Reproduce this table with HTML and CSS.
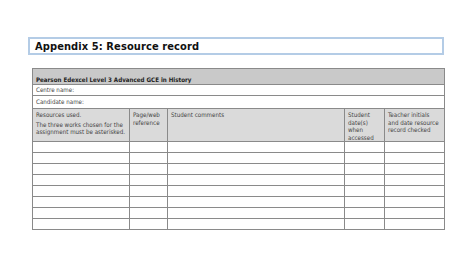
FILE: index.html
```html
<!DOCTYPE html>
<html lang="en">
<head>
  <meta charset="UTF-8">
  <title>Appendix 5: Resource record</title>
  <link rel="stylesheet" href="styles.css">
</head>
<body>
  <!-- Title box -->
  <div class="title-box">
    <h1>Appendix 5: Resource record</h1>
  </div>

  <!-- Resource record table -->
  <table class="record">
    <colgroup>
      <col class="c1"><col class="c2"><col class="c3"><col class="c4"><col class="c5">
    </colgroup>
    <tr class="row-title">
      <th colspan="5">Pearson Edexcel Level 3 Advanced GCE in History</th>
    </tr>
    <tr class="row-info centre">
      <td colspan="5">Centre name:</td>
    </tr>
    <tr class="row-info candidate">
      <td colspan="5">Candidate name:</td>
    </tr>
    <tr class="row-head">
      <td>
        <p>Resources used.</p>
        <p>The three works chosen for the assignment must be asterisked.</p>
      </td>
      <td>Page/web reference</td>
      <td>Student comments</td>
      <td>Student date(s) when accessed</td>
      <td>Teacher initials and date resource record checked</td>
    </tr>
    <tr class="row-data"><td></td><td></td><td></td><td></td><td></td></tr>
    <tr class="row-data"><td></td><td></td><td></td><td></td><td></td></tr>
    <tr class="row-data"><td></td><td></td><td></td><td></td><td></td></tr>
    <tr class="row-data"><td></td><td></td><td></td><td></td><td></td></tr>
    <tr class="row-data"><td></td><td></td><td></td><td></td><td></td></tr>
    <tr class="row-data"><td></td><td></td><td></td><td></td><td></td></tr>
    <tr class="row-data"><td></td><td></td><td></td><td></td><td></td></tr>
    <tr class="row-data"><td></td><td></td><td></td><td></td><td></td></tr>
  </table>
</body>
</html>
```

FILE: styles.css
```css
* {
  margin: 0;
  padding: 0;
  box-sizing: border-box;
}
body {
  font-family: "DejaVu Sans Condensed", "DejaVu Sans", sans-serif;
  font-stretch: condensed;
  background: #fff;
  color: #333;
  padding: 37px 0 0 28px;
}
/* Title box */
.title-box {
  width: 416px;
  height: 18px;
  border: 2px solid #b4cce6;
  padding: 0 0 0 5px;
  display: flex;
  align-items: center;
}
.title-box h1 {
  font-size: 11px;
  font-weight: bold;
  color: #111;
  letter-spacing: 0.1px;
}
/* Table */
.record {
  margin: 13px 0 0 4px;
  width: 412px;
  border-collapse: collapse;
  table-layout: fixed;
  font-size: 6.2px;
  line-height: 7.2px;
  color: #444;
}
.record td,
.record th {
  border: 1px solid #8a8a8a;
  padding: 0 3px;
  text-align: left;
  vertical-align: top;
}
.c1 { width: 97px; }
.c2 { width: 38px; }
.c3 { width: 177px; }
.c4 { width: 40px; }
.c5 { width: 60px; }
.row-title th {
  background: #c9c9c9;
  height: 16px;
  vertical-align: bottom;
  padding-bottom: 1px;
  color: #222;
}
.row-info td {
  vertical-align: middle;
}
.centre td { height: 11px; }
.candidate td { height: 13px; }
.row-head td {
  background: #dadada;
  height: 33px;
  padding-top: 2px;
  line-height: 7.6px;
}
.row-head p + p {
  margin-top: 2px;
}
.row-data td {
  height: 11px;
}
```
